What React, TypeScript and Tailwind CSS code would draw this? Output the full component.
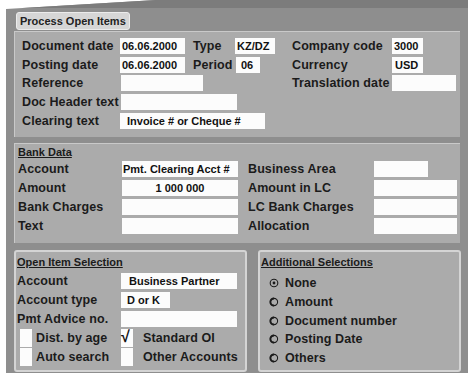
import React from 'react'

function Field({ className, children }: { className: string; children?: React.ReactNode }) {
  return (
    <div className={`h-[16px] bg-[#fcfcfc] text-[11px] font-bold leading-[16px] text-[#111] whitespace-nowrap overflow-hidden ${className}`}>
      {children}
    </div>
  )
}

function Label({ className, children }: { className: string; children: React.ReactNode }) {
  return <div className={`shrink-0 text-[12.5px] font-bold leading-[16px] tracking-[0.1px] text-[#1b1b1b] whitespace-nowrap ${className}`}>{children}</div>
}

function Radio({ checked }: { checked?: boolean }) {
  return (
    <svg width="10" height="10" viewBox="0 0 10 10" className="shrink-0">
      {checked ? (
        <>
          <circle cx="5" cy="5" r="3.8" fill="none" stroke="#1b1b1b" strokeWidth="1.1" />
          <circle cx="5" cy="5" r="1.4" fill="#1b1b1b" />
        </>
      ) : (
        <>
          <circle cx="5" cy="5" r="3.6" fill="none" stroke="#1b1b1b" strokeWidth="1.1" />
          <path d="M5 1.4 A3.6 3.6 0 0 0 5 8.6" fill="none" stroke="#1b1b1b" strokeWidth="2" />
        </>
      )}
    </svg>
  )
}

function Check({ checked }: { checked?: boolean }) {
  return (
    <div className="h-[18px] w-[12px] shrink-0 bg-[#fcfcfc] text-[16px] font-bold leading-[16px] text-[#111]">
      {checked ? '√' : ''}
    </div>
  )
}

export default function App() {
  return (
    <div className="h-[376px] w-[474px] overflow-hidden bg-white font-['Liberation_Sans',Arial,sans-serif]">
      <div className="ml-[6px] h-[373px] w-[462px] border-t-[8px] border-[#7c7c7c] bg-[#8e8e8e] pl-[8px] pr-[2px] pt-[4px] [clip-path:polygon(0_9px,150px_0,100%_0,100%_100%,0_100%)]">
        <div className="ml-[2px] h-[18px] w-fit rounded-[3px] border border-[#ececec] bg-[#d6d6d6] px-[3px] text-[11px] font-bold leading-[16px] text-[#222]">
          Process Open Items
        </div>

        {/* header data */}
        <div className="mt-[1px] h-[106px] w-[446px] border-t border-l border-[#c9c9c9] bg-[#ababab] pl-[7px] pt-[6px]">
          <div className="flex flex-col gap-[2.7px]">
            <div className="flex items-center">
              <Label className="w-[98px]">Document date</Label>
              <Field className="w-[65px] pl-[2px]">06.06.2000</Field>
              <Label className="ml-[8px] w-[42px]">Type</Label>
              <Field className="w-[40px] pl-[2px]">KZ/DZ</Field>
              <Label className="ml-[17px] w-[100px]">Company code</Label>
              <Field className="w-[31px] pl-[2px]">3000</Field>
            </div>
            <div className="flex items-center">
              <Label className="w-[98px]">Posting date</Label>
              <Field className="w-[65px] pl-[2px]">06.06.2000</Field>
              <Label className="ml-[8px] w-[43px]">Period</Label>
              <Field className="w-[24px] pl-[5px]">06</Field>
              <Label className="ml-[32px] w-[100px]">Currency</Label>
              <Field className="w-[31px] pl-[3px]">USD</Field>
            </div>
            <div className="flex items-center">
              <Label className="w-[99px]">Reference</Label>
              <Field className="w-[82px]" />
              <Label className="ml-[89px] w-[100px]">Translation date</Label>
              <Field className="w-[64px]" />
            </div>
            <div className="flex items-center">
              <Label className="w-[99px] tracking-[-0.1px]">Doc Header text</Label>
              <Field className="w-[116px]" />
            </div>
            <div className="flex items-center">
              <Label className="w-[98px]">Clearing text</Label>
              <Field className="w-[145px] pl-[7px]">Invoice # or Cheque #</Field>
            </div>
          </div>
        </div>

        {/* bank data */}
        <div className="mt-[6px] h-[100px] w-[446px] border-t border-l border-[#c9c9c9] bg-[#ababab] pl-[3px] pt-[2px]">
          <div className="text-[11px] font-bold leading-[13px] text-[#1b1b1b] underline">Bank Data</div>
          <div className="mt-[2px] flex flex-col gap-[3px]">
            <div className="flex items-center">
              <Label className="w-[104px]">Account</Label>
              <Field className="w-[116px] pl-[1px] text-[11px]">Pmt. Clearing Acct #</Field>
              <Label className="ml-[10px] w-[126px]">Business Area</Label>
              <Field className="w-[54px]" />
            </div>
            <div className="flex items-center">
              <Label className="w-[104px]">Amount</Label>
              <Field className="w-[116px] text-center">1 000 000</Field>
              <Label className="ml-[10px] w-[126px]">Amount in LC</Label>
              <Field className="w-[83px]" />
            </div>
            <div className="flex items-center">
              <Label className="w-[104px]">Bank Charges</Label>
              <Field className="w-[116px]" />
              <Label className="ml-[10px] w-[126px]">LC Bank Charges</Label>
              <Field className="w-[83px]" />
            </div>
            <div className="flex items-center">
              <Label className="w-[104px]">Text</Label>
              <Field className="w-[116px]" />
              <Label className="ml-[10px] w-[126px]">Allocation</Label>
              <Field className="w-[83px]" />
            </div>
          </div>
        </div>

        <div className="mt-[7px] flex gap-[11px]">
          {/* open item selection */}
          <div className="h-[122px] w-[233px] rounded-[3px] border-2 border-[#d4d4d4] bg-[#ababab] pl-[1px] pt-[4px]">
            <div className="text-[11px] font-bold leading-[13px] text-[#1b1b1b] underline">Open Item Selection</div>
            <div className="mt-[4px] flex flex-col gap-[3px]">
              <div className="flex items-center">
                <Label className="w-[104px]">Account</Label>
                <Field className="w-[116px] pl-[8px] text-[11.5px]">Business Partner</Field>
              </div>
              <div className="flex items-center">
                <Label className="w-[104px] tracking-[-0.2px]">Account type</Label>
                <Field className="w-[49px] pl-[6px] text-[11.5px]">D or K</Field>
              </div>
              <div className="flex items-center">
                <Label className="w-[104px]">Pmt Advice no.</Label>
                <Field className="w-[116px]" />
              </div>
            </div>
            <div className="mt-[2px] flex flex-col gap-[1px]">
              <div className="flex items-center">
                <div className="ml-[3px]"><Check /></div>
                <Label className="ml-[4px] w-[85px]">Dist. by age</Label>
                <Check checked />
                <Label className="ml-[10px]">Standard OI</Label>
              </div>
              <div className="flex items-center">
                <div className="ml-[3px]"><Check /></div>
                <Label className="ml-[4px] w-[85px]">Auto search</Label>
                <Check />
                <Label className="ml-[10px]">Other Accounts</Label>
              </div>
            </div>
          </div>

          {/* additional selections */}
          <div className="h-[122px] w-[203px] rounded-[3px] border-2 border-[#d4d4d4] bg-[#ababab] pl-[1px] pt-[4px]">
            <div className="text-[11px] font-bold leading-[13px] text-[#1b1b1b] underline">Additional Selections</div>
            <div className="mt-[6px] flex flex-col gap-[2.8px] pl-[8px]">
              {['None', 'Amount', 'Document number', 'Posting Date', 'Others'].map((o, i) => (
                <div key={o} className="flex items-center gap-[6px]">
                  <Radio checked={i === 0} />
                  <Label className="">{o}</Label>
                </div>
              ))}
            </div>
          </div>
        </div>
      </div>
    </div>
  )
}
